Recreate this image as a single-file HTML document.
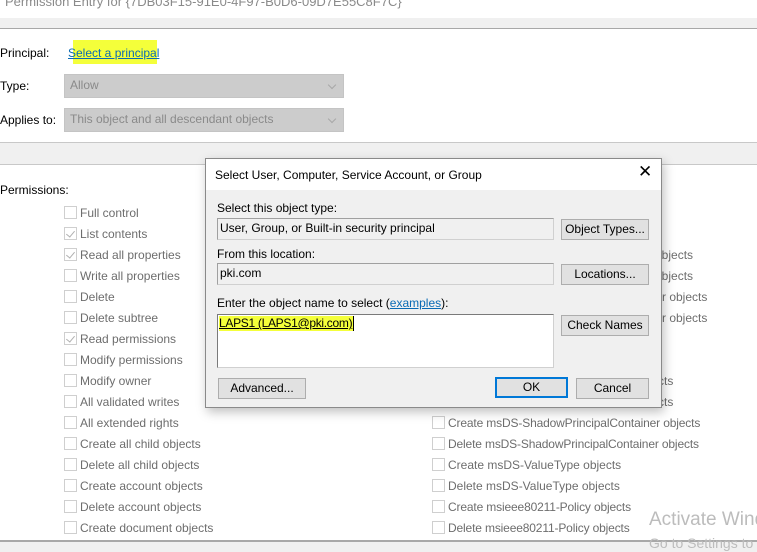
<!DOCTYPE html>
<html><head><meta charset="utf-8"><style>
*{margin:0;padding:0;box-sizing:border-box}
body{width:757px;height:552px;overflow:hidden;background:#fff;font-family:"Liberation Sans",sans-serif;font-size:12px;color:#000;position:relative}
.a{position:absolute;white-space:nowrap}
.g{color:#6d6d6d}
.cb{position:absolute;width:13px;height:13px;border:1px solid #cfcfcf;background:#fff}
.ck::after{content:"";position:absolute;left:3px;top:1px;width:4px;height:7px;border:solid #b0b0b0;border-width:0 1px 1px 0;transform:rotate(40deg)}
.sel{position:absolute;background:#cccccc;border:1px solid #c4c4c4;color:#8a8a8a;padding:3px 5px;height:24px}
.sel::after{content:"";position:absolute;right:8px;top:7px;width:5px;height:5px;border:solid #a8a8a8;border-width:0 1px 1px 0;transform:rotate(45deg)}
.btn{position:absolute;background:#e1e1e1;border:1px solid #adadad;text-align:center;line-height:19px;height:21px}
.fld{position:absolute;background:#f0f0f0;border:1px solid #7a7a7a;border-color:#a0a0a0 #d0d0d0 #d0d0d0 #a0a0a0;padding:2px 2px}
</style></head><body>
<div class="a" style="left:0;top:0;width:757px;height:18px;background:#fff"></div>
<div class="a g" style="left:5px;top:-6px;font-size:13px;color:#8a8a8a">Permission Entry for {7DB03F15-91E0-4F97-B0D6-09D7E55C8F7C}</div>
<div class="a" style="left:0;top:18px;width:757px;height:11px;background:#f0f0f0;border-bottom:1px solid #a8a8a8"></div>
<div class="a" style="left:0;top:46px">Principal:</div>
<div class="a" style="left:73px;top:40px;width:84px;height:24px;background:#f4ff3a"></div>
<div class="a" style="left:68px;top:46px;color:#0a6bb5;text-decoration:underline">Select a principal</div>
<div class="a" style="left:0;top:79px">Type:</div>
<div class="sel" style="left:64px;top:74px;width:280px">Allow</div>
<div class="a" style="left:0;top:113px">Applies to:</div>
<div class="sel" style="left:64px;top:108px;width:280px">This object and all descendant objects</div>
<div class="a" style="left:0;top:142px;width:757px;height:23px;background:#f0f0f0;border-top:1px solid #c8c8c8;border-bottom:1px solid #c8c8c8"></div>
<div class="a" style="left:0;top:183px">Permissions:</div>

<div class="cb" style="left:64px;top:206px"></div><div class="a g" style="left:80px;top:206px">Full control</div>
<div class="cb ck" style="left:64px;top:227px"></div><div class="a g" style="left:80px;top:227px">List contents</div>
<div class="cb ck" style="left:64px;top:248px"></div><div class="a g" style="left:80px;top:248px">Read all properties</div>
<div class="cb" style="left:64px;top:269px"></div><div class="a g" style="left:80px;top:269px">Write all properties</div>
<div class="cb" style="left:64px;top:290px"></div><div class="a g" style="left:80px;top:290px">Delete</div>
<div class="cb" style="left:64px;top:311px"></div><div class="a g" style="left:80px;top:311px">Delete subtree</div>
<div class="cb ck" style="left:64px;top:332px"></div><div class="a g" style="left:80px;top:332px">Read permissions</div>
<div class="cb" style="left:64px;top:353px"></div><div class="a g" style="left:80px;top:353px">Modify permissions</div>
<div class="cb" style="left:64px;top:374px"></div><div class="a g" style="left:80px;top:374px">Modify owner</div>
<div class="cb" style="left:64px;top:395px"></div><div class="a g" style="left:80px;top:395px">All validated writes</div>
<div class="cb" style="left:64px;top:416px"></div><div class="a g" style="left:80px;top:416px">All extended rights</div>
<div class="cb" style="left:64px;top:437px"></div><div class="a g" style="left:80px;top:437px">Create all child objects</div>
<div class="cb" style="left:64px;top:458px"></div><div class="a g" style="left:80px;top:458px">Delete all child objects</div>
<div class="cb" style="left:64px;top:479px"></div><div class="a g" style="left:80px;top:479px">Create account objects</div>
<div class="cb" style="left:64px;top:500px"></div><div class="a g" style="left:80px;top:500px">Delete account objects</div>
<div class="cb" style="left:64px;top:521px"></div><div class="a g" style="left:80px;top:521px">Create document objects</div>

<div class="a g" style="left:655px;top:248px">objects</div>
<div class="a g" style="left:655px;top:269px">objects</div>
<div class="a g" style="left:662px;top:290px">r objects</div>
<div class="a g" style="left:662px;top:311px">r objects</div>
<div class="a g" style="left:658px;top:374px">cts</div>
<div class="a g" style="left:658px;top:395px">cts</div>
<div class="cb" style="left:432px;top:416px"></div><div class="a g" style="left:448px;top:416px;letter-spacing:-0.15px">Create msDS-ShadowPrincipalContainer objects</div>
<div class="cb" style="left:432px;top:437px"></div><div class="a g" style="left:448px;top:437px;letter-spacing:-0.15px">Delete msDS-ShadowPrincipalContainer objects</div>
<div class="cb" style="left:432px;top:458px"></div><div class="a g" style="left:448px;top:458px">Create msDS-ValueType objects</div>
<div class="cb" style="left:432px;top:479px"></div><div class="a g" style="left:448px;top:479px">Delete msDS-ValueType objects</div>
<div class="cb" style="left:432px;top:500px"></div><div class="a g" style="left:448px;top:500px;letter-spacing:-0.15px">Create msieee80211-Policy objects</div>
<div class="cb" style="left:432px;top:521px"></div><div class="a g" style="left:448px;top:521px;letter-spacing:-0.15px">Delete msieee80211-Policy objects</div>

<div class="a" style="left:0;top:540px;width:757px;height:12px;background:#f0f0f0;border-top:2px solid #a8a8a8"></div>
<div class="a" style="left:649px;top:505px;width:108px;height:47px;overflow:hidden">
 <div class="a" style="left:0;top:4px;font-size:19px;color:#bcbcbc">Activate Windows</div>
 <div class="a" style="left:0;top:30px;font-size:14px;color:#bcbcbc">Go to Settings to</div>
</div>

<!-- dialog -->
<div class="a" style="left:205px;top:158px;width:457px;height:250px;background:#f0f0f0;border:1px solid #8a8a8a;box-shadow:2px 4px 10px rgba(0,0,0,.25)">
 <div class="a" style="left:0;top:0;width:455px;height:31px;background:#fff"></div>
 <div class="a" style="left:9px;top:9px">Select User, Computer, Service Account, or Group</div>
 <div class="a" style="left:432px;top:3px;font-size:17px">✕</div>
 <div class="a" style="left:11px;top:42px">Select this object type:</div>
 <div class="fld" style="left:11px;top:59px;width:337px;height:22px">User, Group, or Built-in security principal</div>
 <div class="btn" style="left:355px;top:60px;width:88px">Object Types...</div>
 <div class="a" style="left:11px;top:88px">From this location:</div>
 <div class="fld" style="left:11px;top:104px;width:337px;height:22px">pki.com</div>
 <div class="btn" style="left:355px;top:105px;width:88px">Locations...</div>
 <div class="a" style="left:11px;top:137px">Enter the object name to select (<span style="color:#0a6bb5;text-decoration:underline">examples</span>):</div>
 <div class="a" style="left:11px;top:155px;width:337px;height:54px;background:#fff;border:1px solid #7a7a7a;border-color:#7a7a7a #d0d0d0 #d0d0d0 #7a7a7a"></div>
 <div class="a" style="left:13px;top:157px;height:15px;padding-right:1px;background:#f4ff3a;border-right:1px solid #000;line-height:15px;text-decoration:underline;letter-spacing:-0.3px">LAPS1 (LAPS1@pki.com)</div>
 <div class="btn" style="left:355px;top:156px;width:88px">Check Names</div>
 <div class="btn" style="left:12px;top:219px;width:88px">Advanced...</div>
 <div class="btn" style="left:289px;top:218px;width:73px;border:2px solid #0078d7;line-height:17px">OK</div>
 <div class="btn" style="left:370px;top:219px;width:73px">Cancel</div>
</div>
</body></html>
